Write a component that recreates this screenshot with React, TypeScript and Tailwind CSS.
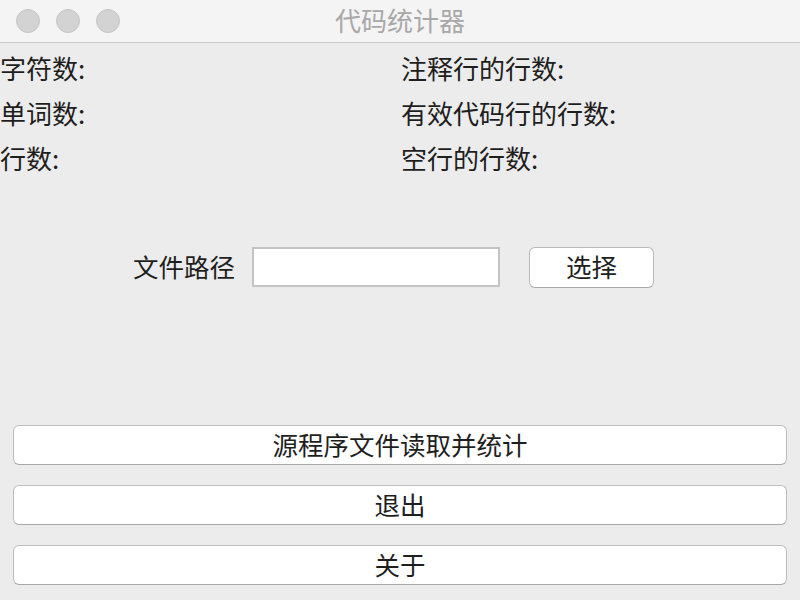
import React from "react";

const font = { fontFamily: '"Noto Sans CJK SC", "Noto Sans", sans-serif' };

export default function App() {
  return (
    <div className="w-[800px] h-[600px] bg-[#ececec] flex flex-col overflow-hidden text-[#1e1e1e]" style={font}>
      <div className="h-[43px] shrink-0 bg-[#f5f4f5] border-b border-[#c9c8c9] flex items-center relative">
        <div className="flex items-center gap-[16px] pl-[16px]">
          <div className="w-[24px] h-[24px] rounded-full bg-[#d3d3d3] border border-[#c6c6c6]" />
          <div className="w-[24px] h-[24px] rounded-full bg-[#d3d3d3] border border-[#c6c6c6]" />
          <div className="w-[24px] h-[24px] rounded-full bg-[#d3d3d3] border border-[#c6c6c6]" />
        </div>
        <div className="absolute inset-0 flex items-center justify-center text-[26px] leading-none text-[#a8a8a8] pb-[2px]">
          代码统计器
        </div>
      </div>

      <div className="grid grid-cols-[401px_1fr] pt-[2px] text-[26px] leading-[45px]">
        <div>字符数:</div>
        <div>注释行的行数:</div>
        <div>单词数:</div>
        <div>有效代码行的行数:</div>
        <div>行数:</div>
        <div>空行的行数:</div>
      </div>

      <div className="flex items-center mt-[67px] pl-[133px] h-[40px]">
        <div className="text-[25.5px] leading-none pb-[3px]">文件路径</div>
        <div className="ml-[17px] w-[248px] h-[40px] bg-white border-2 border-[#c3c3c3]" />
        <button className="ml-[29px] w-[125px] h-[41px] bg-white border border-[#b9b9b9] border-b-[#a9a9a9] rounded-[6px] text-[25.5px] leading-none pb-[3px] text-[#1e1e1e]">
          选择
        </button>
      </div>

      <div className="flex flex-col gap-[20px] px-[13px] mt-[138px]">
        {["源程序文件读取并统计", "退出", "关于"].map((t) => (
          <button
            key={t}
            className="h-[40px] w-full bg-white border border-[#bebebe] border-b-[#a8a8a8] rounded-[6px] text-[25.5px] leading-none pb-[2px] text-[#1e1e1e]"
          >
            {t}
          </button>
        ))}
      </div>
    </div>
  );
}
